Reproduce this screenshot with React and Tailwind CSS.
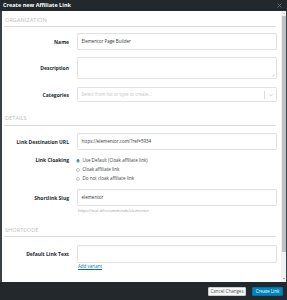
import React from "react";

const font = { fontFamily: '"Open Sans", "Liberation Sans", sans-serif' };

const SectionTitle = ({ children, className = "" }) => (
  <div className={`mx-[1px] border-b border-[#dcdcdc] pl-[1px] pb-[2px] text-[5.5px] leading-[8px] tracking-[0.1px] text-[#bcbcbc] ${className}`}>
    {children}
  </div>
);

const Row = ({ label, children, className = "", align = "items-center" }) => (
  <div className={`flex ${align} ${className}`}>
    <div className="w-[67px] shrink-0 pr-[1px] text-right text-[5px] font-bold leading-[8px] text-[#23282d]">
      {label}
    </div>
    <div className="ml-[7px] flex-1">{children}</div>
  </div>
);

const Input = ({ value, h = "h-[17px]" }) => (
  <div className={`${h} flex items-center rounded-[1px] border border-[#e2e2e2] bg-white pl-[3.5px] text-[4.5px] text-[#32373c] shadow-[inset_0_0.5px_1px_rgba(0,0,0,0.05)]`}>
    {value}
  </div>
);

const Radio = ({ checked, label }) => (
  <div className="flex h-[9px] items-center">
    <span className="flex h-[4px] w-[4px] items-center justify-center rounded-full border-[0.5px] border-[#c4c4c4] bg-white">
      {checked && <span className="h-[2.5px] w-[2.5px] rounded-full bg-[#1e8cbe]" />}
    </span>
    <span className="ml-[2.5px] text-[4.5px] text-[#444]">{label}</span>
  </div>
);

export default function App() {
  return (
    <div className="flex h-[300px] w-[287px] flex-col bg-[#23282d]" style={font}>
      {/* Header */}
      <div className="flex h-[11px] shrink-0 items-center justify-between pl-[3px] pr-[5px]">
        <span className="text-[5.5px] font-bold text-white">Create new Affiliate Link</span>
        <svg width="5" height="5" viewBox="0 0 10 10" className="text-[#6f7377]">
          <path d="M1 1l8 8M9 1l-8 8" stroke="currentColor" strokeWidth="1.6" />
        </svg>
      </div>

      {/* Body */}
      <div className="flex min-h-0 flex-1 border-l-2 border-[#3b4045] bg-white">
        <div className="flex flex-1 flex-col pl-[1px] pr-[4px]">
          <SectionTitle className="pt-[5px]">ORGANIZATION</SectionTitle>

          <Row label="Name" className="mt-[6px]">
            <Input value="Elementor Page Builder" />
          </Row>

          <Row label="Description" className="mt-[7px]">
            <div className="relative h-[22px] rounded-[1px] border border-[#e2e2e2] bg-white">
              <svg width="3" height="3" viewBox="0 0 6 6" className="absolute bottom-[1px] right-[1px] text-[#999]">
                <path d="M5 1L1 5M5 3.5L3.5 5" stroke="currentColor" strokeWidth="0.8" />
              </svg>
            </div>
          </Row>

          <Row label="Categories" className="mt-[8px]">
            <div className="flex h-[15px] items-center rounded-[1px] border border-[#e2e2e2] bg-white pl-[3.5px]">
              <span className="flex-1 text-[4.5px] text-[#c4c4c4]">Select from list or type to create...</span>
              <span className="h-[8px] w-px bg-[#dcdcdc]" />
              <svg width="6" height="4" viewBox="0 0 10 6" className="mx-[2.5px] text-[#cfcfcf]">
                <path d="M2 1.5l3 3 3-3" fill="none" stroke="currentColor" strokeWidth="1.3" />
              </svg>
            </div>
          </Row>

          <SectionTitle className="mt-[12px] pb-[3px]">DETAILS</SectionTitle>

          <Row label="Link Destination URL" className="mt-[7px]">
            <Input value="https://elementor.com/?ref=5934" />
          </Row>

          <Row label="Link Cloaking" className="mt-[6px]" align="items-start">
            <div className="-ml-[1px] flex flex-col">
              <Radio checked label="Use Default (Cloak affiliate link)" />
              <Radio label="Cloak affiliate link" />
              <Radio label="Do not cloak affiliate link" />
            </div>
          </Row>

          <Row label="Shortlink Slug" className="mt-[6px]">
            <Input value="elementor" />
          </Row>
          <div className="ml-[75px] mt-[2px] text-[4px] leading-[6px] text-[#999]">
            https://test.d/recommends/elementor
          </div>

          <SectionTitle className="mt-[12px]">SHORTCODE</SectionTitle>

          <Row label="Default Link Text" className="mt-[8px]">
            <Input value="" h="h-[18px]" />
          </Row>
          <div className="ml-[75px] text-[4.5px] leading-[6px] text-[#0073aa] underline">Add variant</div>
        </div>

        {/* Scrollbar */}
        <div className="flex w-[6px] shrink-0 flex-col border-r border-[#3b4045] bg-[#f1f1f1]">
          <div className="flex h-[5px] items-center justify-center">
            <span className="h-0 w-0 border-x-[1.5px] border-b-[1.5px] border-x-transparent border-b-[#a3a3a3]" />
          </div>
          <div className="mx-[0.5px] h-[236px] bg-[#c1c1c1]" />
          <div className="flex-1" />
          <div className="flex h-[7px] items-center justify-center">
            <span className="h-0 w-0 border-x-[1.5px] border-t-[1.5px] border-x-transparent border-t-[#505050]" />
          </div>
        </div>
      </div>

      {/* Footer */}
      <div className="flex h-[18px] shrink-0 items-center justify-end gap-[6px] pr-[4px]">
        <button className="h-[9px] w-[38px] rounded-[1px] border border-[#ccc] bg-[#f7f7f7] text-[4.5px] text-[#555]">
          Cancel Changes
        </button>
        <button className="h-[9px] w-[31px] rounded-[1px] border border-[#0073aa] bg-[#0085ba] text-[4.5px] text-white">
          Create Link
        </button>
      </div>
    </div>
  );
}
